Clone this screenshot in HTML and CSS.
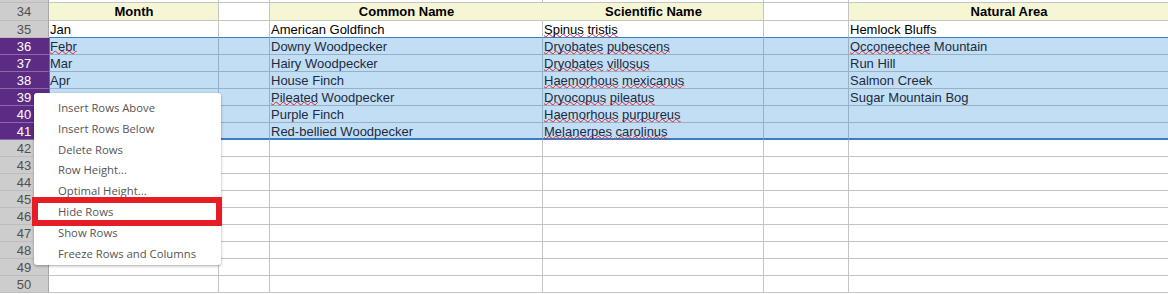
FILE: index.html
```html
<!DOCTYPE html>
<html>
<head>
<meta charset="utf-8">
<link rel="stylesheet" href="styles.css">
</head>
<body>
<div class="sheet">
  <div class="row partial">
    <div class="rh"></div><div class="c a"></div><div class="c b"></div><div class="c cc"></div><div class="c d"></div><div class="c e"></div><div class="c f"></div>
  </div>
  <div class="row head r34">
    <div class="rh">34</div><div class="c a y">Month</div><div class="c b"></div><div class="c cc y">Common Name</div><div class="c d y">Scientific Name</div><div class="c e"></div><div class="c f y">Natural Area</div>
  </div>
  <div class="row pre">
    <div class="rh">35</div><div class="c a">Jan</div><div class="c b"></div><div class="c cc">American Goldfinch</div><div class="c d"><span class="sp">Spinus</span> <span class="sp">tristis</span></div><div class="c e"></div><div class="c f">Hemlock Bluffs</div>
  </div>
  <div class="row sel">
    <div class="rh">36</div><div class="c a"><span class="sp">Febr</span></div><div class="c b"></div><div class="c cc">Downy Woodpecker</div><div class="c d"><span class="sp">Dryobates</span> <span class="sp">pubescens</span></div><div class="c e"></div><div class="c f"><span class="sp">Occoneechee</span> Mountain</div>
  </div>
  <div class="row sel">
    <div class="rh">37</div><div class="c a">Mar</div><div class="c b"></div><div class="c cc">Hairy Woodpecker</div><div class="c d"><span class="sp">Dryobates</span> <span class="sp">villosus</span></div><div class="c e"></div><div class="c f">Run Hill</div>
  </div>
  <div class="row sel">
    <div class="rh">38</div><div class="c a">Apr</div><div class="c b"></div><div class="c cc">House Finch</div><div class="c d"><span class="sp">Haemorhous</span> <span class="sp">mexicanus</span></div><div class="c e"></div><div class="c f">Salmon Creek</div>
  </div>
  <div class="row sel">
    <div class="rh">39</div><div class="c a"></div><div class="c b"></div><div class="c cc"><span class="sp">Pileated</span> Woodpecker</div><div class="c d"><span class="sp">Dryocopus</span> <span class="sp">pileatus</span></div><div class="c e"></div><div class="c f">Sugar Mountain Bog</div>
  </div>
  <div class="row sel">
    <div class="rh">40</div><div class="c a"></div><div class="c b"></div><div class="c cc">Purple Finch</div><div class="c d"><span class="sp">Haemorhous</span> <span class="sp">purpureus</span></div><div class="c e"></div><div class="c f"></div>
  </div>
  <div class="row sel last">
    <div class="rh">41</div><div class="c a"></div><div class="c b"></div><div class="c cc">Red-bellied Woodpecker</div><div class="c d"><span class="sp">Melanerpes</span> <span class="sp">carolinus</span></div><div class="c e"></div><div class="c f"></div>
  </div>
  <div class="row"><div class="rh">42</div><div class="c a"></div><div class="c b"></div><div class="c cc"></div><div class="c d"></div><div class="c e"></div><div class="c f"></div></div>
  <div class="row"><div class="rh">43</div><div class="c a"></div><div class="c b"></div><div class="c cc"></div><div class="c d"></div><div class="c e"></div><div class="c f"></div></div>
  <div class="row"><div class="rh">44</div><div class="c a"></div><div class="c b"></div><div class="c cc"></div><div class="c d"></div><div class="c e"></div><div class="c f"></div></div>
  <div class="row"><div class="rh">45</div><div class="c a"></div><div class="c b"></div><div class="c cc"></div><div class="c d"></div><div class="c e"></div><div class="c f"></div></div>
  <div class="row"><div class="rh">46</div><div class="c a"></div><div class="c b"></div><div class="c cc"></div><div class="c d"></div><div class="c e"></div><div class="c f"></div></div>
  <div class="row"><div class="rh">47</div><div class="c a"></div><div class="c b"></div><div class="c cc"></div><div class="c d"></div><div class="c e"></div><div class="c f"></div></div>
  <div class="row"><div class="rh">48</div><div class="c a"></div><div class="c b"></div><div class="c cc"></div><div class="c d"></div><div class="c e"></div><div class="c f"></div></div>
  <div class="row"><div class="rh">49</div><div class="c a"></div><div class="c b"></div><div class="c cc"></div><div class="c d"></div><div class="c e"></div><div class="c f"></div></div>
  <div class="row"><div class="rh">50</div><div class="c a"></div><div class="c b"></div><div class="c cc"></div><div class="c d"></div><div class="c e"></div><div class="c f"></div></div>

  <div class="menu">
    <div class="item">Insert Rows Above</div>
    <div class="item">Insert Rows Below</div>
    <div class="item">Delete Rows</div>
    <div class="item">Row Height...</div>
    <div class="item">Optimal Height...</div>
    <div class="item">Hide Rows</div>
    <div class="item">Show Rows</div>
    <div class="item">Freeze Rows and Columns</div>
  </div>
  <div class="highlight"></div>
</div>
</body>
</html>
```

FILE: styles.css
```css
html, body {
  margin: 0;
  padding: 0;
  background: #ffffff;
}
.sheet {
  position: relative;
  width: 1168px;
  height: 294px;
  overflow: hidden;
  font-family: "Liberation Sans", Arial, sans-serif;
  font-size: 13px;
  color: #000;
}
.row {
  display: flex;
  height: 17px;
}
.row.partial { height: 3px; }
.row.head { height: 18px; }
.rh {
  box-sizing: border-box;
  flex: 0 0 49px;
  background: #cdcdcd;
  border-right: 1px solid #a8a8a8;
  border-bottom: 1px solid #bdbdbd;
  color: #505050;
  text-align: center;
  line-height: 17px;
  font-size: 13px;
  overflow: hidden;
}
.c {
  box-sizing: border-box;
  border-right: 1px solid #c4c4c4;
  border-bottom: 1px solid #c4c4c4;
  padding-left: 1px;
  line-height: 17px;
  white-space: nowrap;
  overflow: visible;
}
.partial .c, .partial .rh { overflow: hidden; }
.a { flex: 0 0 170px; }
.b { flex: 0 0 51px; }
.cc { flex: 0 0 273px; }
.d { flex: 0 0 221px; }
.e { flex: 0 0 85px; }
.f { flex: 1 1 auto; border-right: none; }

.head .c { line-height: 18px; }
.head .rh { line-height: 18px; }
.c.y {
  background: #f6f6d5;
  font-weight: bold;
  text-align: center;
}
.head .cc.y { border-right-color: #f6f6d5; }

.pre .c { border-bottom-color: #3a7cc4; }

.sel .rh {
  background: #5c2b84;
  color: #ffffff;
  border-bottom-color: #8a6aa8;
  border-right-color: #5c2b84;
}
.sel .c {
  background: #c2def5;
  color: #1c2b40;
  border-right-color: #97b0c6;
  border-bottom-color: #97b0c6;
}
.sel .a { border-left: 1px solid #3a7cc4; padding-left: 0; }
.sel.last .c { border-bottom: 2px solid #3a7cc4; }

.sp {
  text-decoration-line: underline;
  text-decoration-style: wavy;
  text-decoration-color: #dc2430;
  text-decoration-thickness: 1.2px;
  text-underline-offset: -0.5px;
  text-decoration-skip-ink: none;
}

.menu {
  position: absolute;
  left: 34px;
  top: 93px;
  width: 187px;
  height: 172px;
  box-sizing: border-box;
  background: #ffffff;
  border-radius: 3px;
  box-shadow: 0 1px 3px rgba(0, 0, 0, 0.35);
  padding-top: 4px;
  font-family: "Open Sans", "Noto Sans", sans-serif;
  font-size: 11.3px;
  color: #555555;
}
.item {
  height: 20.8px;
  line-height: 21px;
  padding-left: 24px;
  white-space: nowrap;
}
.highlight {
  position: absolute;
  left: 32px;
  top: 197px;
  width: 190px;
  height: 29px;
  box-sizing: border-box;
  border: 6px solid #e41e24;
}
```
